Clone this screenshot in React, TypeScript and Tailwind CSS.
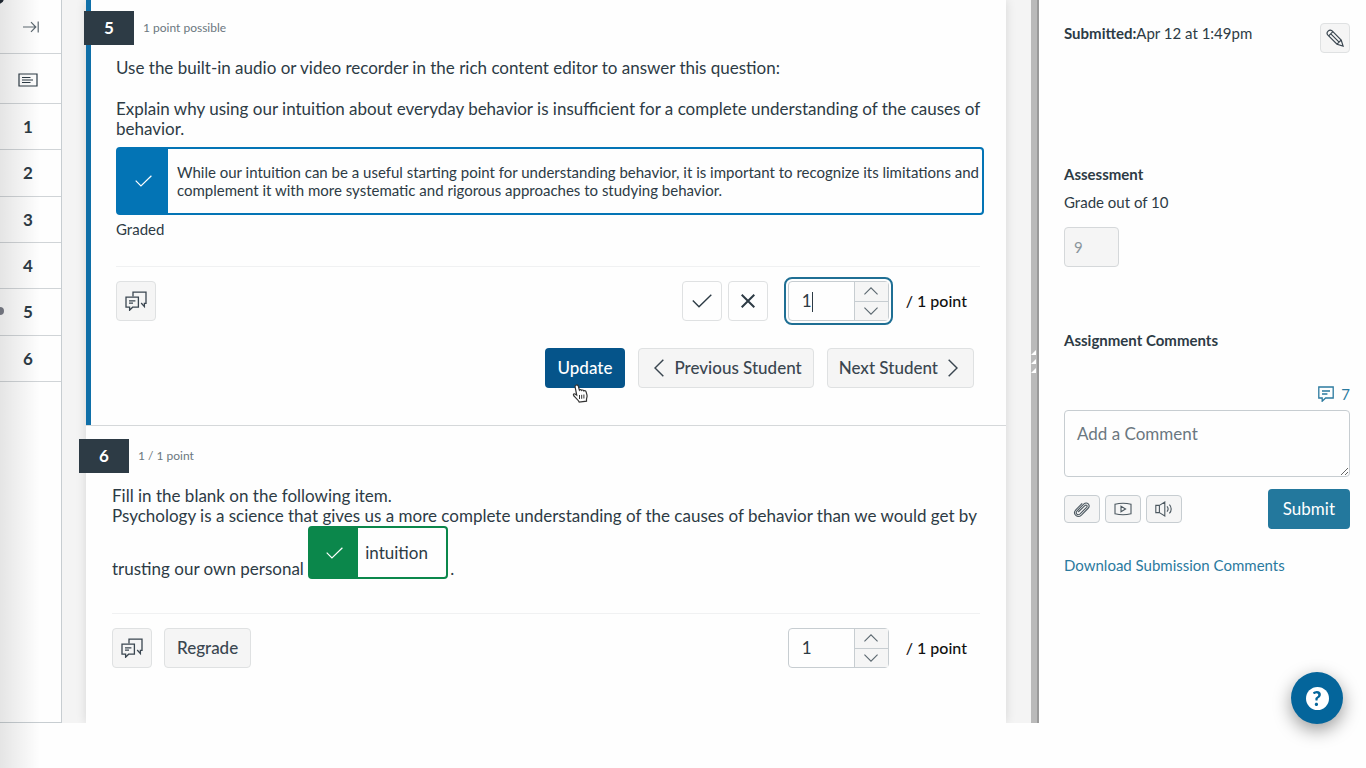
import { type ReactNode, useState } from "react";

const questionNumbers = [1, 2, 3, 4, 5, 6];

const iconProps = {
	fill: "none",
	stroke: "currentColor",
	"aria-hidden": true,
} as const;

const CheckIcon = ({ className }: { className: string }) => (
	<svg viewBox="0 0 20 14" strokeWidth="1.4" className={className} {...iconProps}>
		<path d="M.8 6.6 7 12.8 19.3.8" />
	</svg>
);

const ChevronIcon = ({ className }: { className: string }) => (
	<svg viewBox="0 0 16 9" strokeWidth="1.3" className={className} {...iconProps}>
		<path d="M.5 8.4 8 .9l7.5 7.5" />
	</svg>
);

const DiscussionIcon = () => (
	<svg viewBox="0 0 22 20" strokeWidth="1.3" className="h-5 w-[22px]" {...iconProps}>
		<path d="M8 5.5V1.2h13v11.2h-1.6v3.2L16.2 12" />
		<path d="M1 6.2h12.4v10H7.6l-3 3v-3H1z" />
		<path d="M4 9.8h6.4M4 12.2h4" />
	</svg>
);

const CommentIcon = () => (
	<svg viewBox="0 0 16 16" strokeWidth="1.3" className="size-4" {...iconProps}>
		<path d="M.8 1h14.4v11H7.6l-3.4 3.2V12H.8z" />
		<path d="M4 5h8M4 8h5.4" />
	</svg>
);

const PencilIcon = () => (
	<svg viewBox="0 0 18 18" strokeWidth="1.2" className="size-[18px]" {...iconProps}>
		<path d="M1.7 5.9C-.3 3.4 3.4-.3 5.9 1.7L15.200 11l1.900 6.100-6.100-1.900z" />
		<path d="M2.700 6.900 6.900 2.700M4.800 4.800l8.300 8.300M11 15.200l2.100-2.100 2.100-2.100" />
	</svg>
);

const PaperclipIcon = () => (
	<svg viewBox="0 0 18 18" strokeWidth="1.1" className="size-[18px]" {...iconProps}>
		<path d="m5.200 12 6.600-6.400c1.500-1.300 3.100.3 1.800 1.700l-6.500 6.500c-2.500 2.300-5.200-.6-3-3l6.600-6.600c3.300-3.100 7.400 1 4.200 4.300l-6.500 6.600c-3.900 3.700-9.200-1.400-5.600-5.300l6.400-6.400" />
	</svg>
);

const MediaIcon = () => (
	<svg viewBox="0 0 18 14" strokeWidth="1.1" className="h-[14px] w-[18px]" {...iconProps}>
		<path d="M1 2.2Q9 .2 17 2.2v9.600Q9 13.800 1 11.800z" />
		<path d="M7 4.200v5.600L11.600 7z" />
	</svg>
);

const SpeakerIcon = () => (
	<svg viewBox="0 0 18 16" strokeWidth="1.1" className="h-4 w-[18px]" {...iconProps}>
		<path d="M4.400 4.400H.8v7.200h3.600zM4.400 4.400 9.800 1v14l-5.400-3.400" />
		<path d="M12 5.400c1.300 1.500 1.300 3.700 0 5.200M14.400 3.600c2.400 2.500 2.400 6.300 0 8.800" />
	</svg>
);

const HandCursor = () => (
	<svg viewBox="0 0 17 19" className="pointer-events-none absolute top-9 left-[27px] h-[19px] w-[17px]" aria-hidden>
		<path
			d="M4 1.200c1-.6 2 0 2.300 1l1.100 4c.6-.8 1.800-.8 2.200.2.7-.7 1.900-.5 2.200.5 1-.6 2 0 2.300 1l.9 3.200c.4 2-.5 3-.5 4.400v1.600l-7.300.9c-1-2.400-3.100-3.400-4.600-5.300-.7-1-1.700-1.700-1.100-2.500.7-.9 2.100 0 3.200.9L3.100 2.900C2.900 2.100 3.300 1.500 4 1.200z"
			fill="#fff"
			stroke="#333"
			strokeWidth="1.2"
		/>
		<path d="M7.500 11v4M9.700 10.800v4M11.900 10.500v4" stroke="#333" />
	</svg>
);

const buttonStyle =
	"flex cursor-pointer items-center justify-center rounded-sm border border-[#dfe1e2] bg-[#f5f5f5] text-[#3a4650]";

type QuestionHeaderType = {
	number: number;
	points: string;
};

const QuestionHeader = ({ number, points }: QuestionHeaderType) => (
	<header className="flex items-center gap-[9px]">
		<h2 className="flex h-[34px] w-[50px] items-center justify-center bg-[#2d3b45] text-[17px] font-bold text-white">
			{number}
		</h2>
		<span className="text-[12px] text-[#6b7780]">{points}</span>
	</header>
);

type ScoreInputType = {
	label: string;
	focused?: boolean;
};

const ScoreInput = ({ label, focused = false }: ScoreInputType) => {
	const [score, setScore] = useState(1);
	return (
		<div className="flex items-center gap-[17px]">
			<div
				className={
					focused
						? "relative flex h-10 w-[101px] rounded-sm border border-[#c7cdd1] outline-2 outline-offset-2 outline-[#1f6f94]"
						: "relative flex h-10 w-[101px] rounded-sm border border-[#c7cdd1]"
				}
			>
				<input
					type="text"
					inputMode="numeric"
					aria-label={label}
					value={score}
					onChange={(event) => setScore(Number(event.target.value) || 0)}
					className="min-w-0 flex-1 bg-transparent pl-[13px] text-[17px] text-[#2d3b45] outline-none"
				/>
				{focused && (
					<span className="absolute top-[10px] left-[23px] h-5 w-px bg-[#2d3b45]" />
				)}
				<div className="flex w-[34px] flex-col border-l border-[#c7cdd1] bg-[#f5f5f5] text-[#5c6870]">
					<button
						type="button"
						aria-label="Increase score"
						onClick={() => setScore(score + 1)}
						className="flex flex-1 items-center justify-center border-b border-[#c7cdd1]"
					>
						<ChevronIcon className="h-2 w-[14px]" />
					</button>
					<button
						type="button"
						aria-label="Decrease score"
						onClick={() => setScore(score - 1)}
						className="flex flex-1 items-center justify-center"
					>
						<ChevronIcon className="h-2 w-[14px] rotate-180" />
					</button>
				</div>
			</div>
			<span className="text-[16px] font-medium text-[#111]">/ 1 point</span>
		</div>
	);
};

const MediaButton = ({ label, children }: { label: string; children: ReactNode }) => (
	<button
		type="button"
		aria-label={label}
		className="flex h-7 w-9 cursor-pointer items-center justify-center rounded-sm border border-[#c7cdd1] bg-[#f5f5f5] text-[#4c5860]"
	>
		{children}
	</button>
);

const QuestionNav = () => (
	<nav
		aria-label="Questions"
		className="relative w-[62px] shrink-0 border-r border-b border-[#c7cdd1] text-[#2d3b45]"
	>
		<span className="absolute -top-2 -left-2 size-3 rounded-full bg-[#222b35]" />
		<button
			type="button"
			aria-label="Collapse navigation"
			className="flex h-[54px] w-full items-center justify-center border-b border-[#d0d4d7] text-[#5c6870]"
		>
			<svg viewBox="0 0 16 12" strokeWidth="1.2" className="h-3 w-4" {...iconProps}>
				<path d="M0 6h12.500M8 1.200 12.800 6 8 10.800M15.200.5v11" />
			</svg>
		</button>
		<button
			type="button"
			aria-label="Instructions"
			className="flex h-[50px] w-full items-center border-b border-[#d0d4d7] pt-[3px] pl-[18px]"
		>
			<svg viewBox="0 0 20 14" strokeWidth="1.2" className="h-[14px] w-5" {...iconProps}>
				<path d="M1 1h18v12H1zM4 4.500h8.500M4 7h11M4 9.500h8.500" />
			</svg>
		</button>
		<ol className="grid h-[278px] grid-rows-6">
			{questionNumbers.map((number) => (
				<li key={number} className="relative border-b border-[#d0d4d7]">
					{number === 5 && (
						<span className="absolute top-[18px] -left-1 size-2 rounded-full bg-[#7b7e89]" />
					)}
					<a
						href={`#question-${number}`}
						className="flex h-full items-center justify-center pr-[5px] text-[17px] font-bold"
					>
						{number}
					</a>
				</li>
			))}
		</ol>
	</nav>
);

const Submission = () => (
	<main className="min-w-0 flex-1 bg-[#fefefe] text-[17px] leading-5 text-[#2d3b45] shadow-[0_0_10px_rgba(0,0,0,0.12)]">
		<section id="question-5" className="relative border-b border-[#d5d8da] pt-[11px] pb-[37px]">
			<div className="absolute inset-y-0 left-0 w-[5px] bg-[#0f6fa8]" />
			<div className="relative -ml-[2px]">
				<QuestionHeader number={5} points="1 point possible" />
			</div>
			<div className="pr-[22px] pl-[30px]">
				<p className="mt-[13px]">
					Use the built-in audio or video recorder in the rich content editor to
					answer this question:
				</p>
				<p className="mt-[21px]">
					Explain why using our intuition about everyday behavior is
					insufficient for a complete understanding of the causes of behavior.
				</p>
				<div className="mt-2 flex h-[68px] rounded-sm border-2 border-[#0374b5]">
					<div className="flex w-[50px] shrink-0 items-center justify-center bg-[#0374b5] text-white">
						<CheckIcon className="h-3 w-[17px]" />
					</div>
					<p className="self-center pl-[9px] text-[15px] leading-[18px]">
						While our intuition can be a useful starting point for understanding
						behavior, it is important to recognize its limitations and
						complement it with more systematic and rigorous approaches to
						studying behavior.
					</p>
				</div>
				<p className="mt-1 text-[15px]">Graded</p>
				<hr className="mt-[27px] mr-1 border-[#f0f1f2]" />
				<div className="mt-[14px] flex items-center pr-[17px]">
					<button type="button" aria-label="Feedback" className={`${buttonStyle} size-10`}>
						<DiscussionIcon />
					</button>
					<button
						type="button"
						aria-label="Mark correct"
						className="ml-auto flex size-10 items-center justify-center rounded-sm border border-[#dfe1e2]"
					>
						<CheckIcon className="h-[14px] w-5" />
					</button>
					<button
						type="button"
						aria-label="Mark incorrect"
						className="mr-5 ml-[6px] flex size-10 items-center justify-center rounded-sm border border-[#dfe1e2]"
					>
						<svg viewBox="0 0 14 14" strokeWidth="2" className="size-[14px]" {...iconProps}>
							<path d="m.7.7 12.600 12.600M13.300.7.7 13.300" />
						</svg>
					</button>
					<ScoreInput label="Question 5 score" focused />
				</div>
				<div className="mt-[27px] flex justify-end gap-[13px] pr-[10px] font-medium">
					<div className="relative">
						<button
							type="button"
							className="h-10 cursor-pointer rounded-sm bg-[#05548a] px-[13px] text-white"
						>
							Update
						</button>
						<HandCursor />
					</div>
					<button type="button" className={`${buttonStyle} h-10 gap-[6px] px-[11px]`}>
						<ChevronIcon className="h-[10px] w-[18px] -rotate-90" />
						Previous Student
					</button>
					<button type="button" className={`${buttonStyle} h-10 gap-[6px] px-[11px]`}>
						Next Student
						<ChevronIcon className="h-[10px] w-[18px] rotate-90" />
					</button>
				</div>
			</div>
		</section>
		<section id="question-6" className="pt-[13px]">
			<div className="relative -ml-[7px]">
				<QuestionHeader number={6} points="1 / 1 point" />
			</div>
			<div className="pr-[22px] pl-[26px]">
				<p className="mt-[13px]">Fill in the blank on the following item.</p>
				<p>
					Psychology is a science that gives us a more complete understanding of
					the causes of behavior than we would get by trusting our own personal{" "}
					<span className="mr-[2px] inline-flex h-[53px] w-[140px] rounded-sm border-2 border-[#0b874b] align-text-bottom">
						<span className="flex w-12 items-center justify-center bg-[#0b874b] text-white">
							<CheckIcon className="h-3 w-[17px]" />
						</span>
						<span className="self-center pl-[7px]">intuition</span>
					</span>
					.
				</p>
				<hr className="mt-[34px] mr-1 border-[#f0f1f2]" />
				<div className="mt-[14px] flex items-center gap-3 pr-[17px]">
					<button type="button" aria-label="Feedback" className={`${buttonStyle} size-10`}>
						<DiscussionIcon />
					</button>
					<button type="button" className={`${buttonStyle} mr-auto h-10 px-3 font-medium`}>
						Regrade
					</button>
					<ScoreInput label="Question 6 score" />
				</div>
			</div>
		</section>
	</main>
);

const GradingPanel = () => (
	<aside className="w-[327px] shrink-0 pt-[23px] pr-4 pl-[25px] text-[15px] leading-5 text-[#2d3b45]">
		<div className="flex items-start justify-between">
			<p>
				<strong>Submitted:</strong>Apr 12 at 1:49pm
			</p>
			<button type="button" aria-label="Edit submission" className={`${buttonStyle} size-[30px]`}>
				<PencilIcon />
			</button>
		</div>
		<h2 className="mt-[111px] font-bold">Assessment</h2>
		<label htmlFor="grade" className="mt-2 block">
			Grade out of 10
		</label>
		<input
			id="grade"
			type="text"
			defaultValue="9"
			className="mt-[15px] block h-10 w-[55px] rounded-sm border border-[#d5d8da] bg-[#f5f5f5] px-[9px] text-[#8b959c]"
		/>
		<h2 className="mt-[63px] font-bold">Assignment Comments</h2>
		<p className="mt-[34px] flex items-center justify-end gap-[7px] text-[#2b7a9f]">
			<CommentIcon />7
		</p>
		<textarea
			aria-label="Add a Comment"
			placeholder="Add a Comment"
			className="mt-[6px] block h-[67px] w-full rounded-sm border border-[#c7cdd1] px-3 py-[13px] text-[17px] placeholder:text-[#6b7780]"
		/>
		<div className="mt-3 flex items-center gap-[5px]">
			<MediaButton label="Attach a file">
				<PaperclipIcon />
			</MediaButton>
			<MediaButton label="Record media">
				<MediaIcon />
			</MediaButton>
			<MediaButton label="Speech recognition">
				<SpeakerIcon />
			</MediaButton>
			<button
				type="button"
				className="ml-auto h-10 cursor-pointer rounded-sm bg-[#23789d] px-[15px] text-[17px] text-white"
			>
				Submit
			</button>
		</div>
		<a href="#comments" className="mt-[26px] inline-block text-[#2b7a9f]">
			Download Submission Comments
		</a>
	</aside>
);

export default function App() {
	return (
		<div className="relative flex min-h-screen flex-col bg-[#fefefe] pb-[45px] font-['Lato',sans-serif]">
			<div className="flex flex-1">
				<QuestionNav />
				<div className="flex min-w-0 flex-1 overflow-hidden bg-[#f4f4f4] pr-[25px] pl-6">
					<Submission />
				</div>
				<div className="relative w-2 shrink-0 border-r-2 border-[#9a9a9a] bg-[#bababa]">
					<div className="absolute top-[350px] left-0 flex flex-col gap-1 text-white">
						{[0, 1, 2].map((dot) => (
							<svg key={dot} viewBox="0 0 5 5" className="size-[5px]" aria-hidden>
								<path d="M5 0v5H0z" fill="currentColor" />
							</svg>
						))}
					</div>
				</div>
				<GradingPanel />
			</div>
			<div className="pointer-events-none absolute inset-y-0 left-0 w-10 bg-linear-to-r from-black/10 to-transparent" />
			<button
				type="button"
				aria-label="Help"
				className="fixed right-[23px] bottom-[44px] flex size-[52px] cursor-pointer items-center justify-center rounded-full bg-[#04659b] shadow-[0_6px_18px_rgba(0,0,0,0.4)]"
			>
				<span className="flex size-[23px] items-center justify-center rounded-full bg-white text-[20px] leading-none font-black text-[#04659b]">
					?
				</span>
			</button>
		</div>
	);
}
